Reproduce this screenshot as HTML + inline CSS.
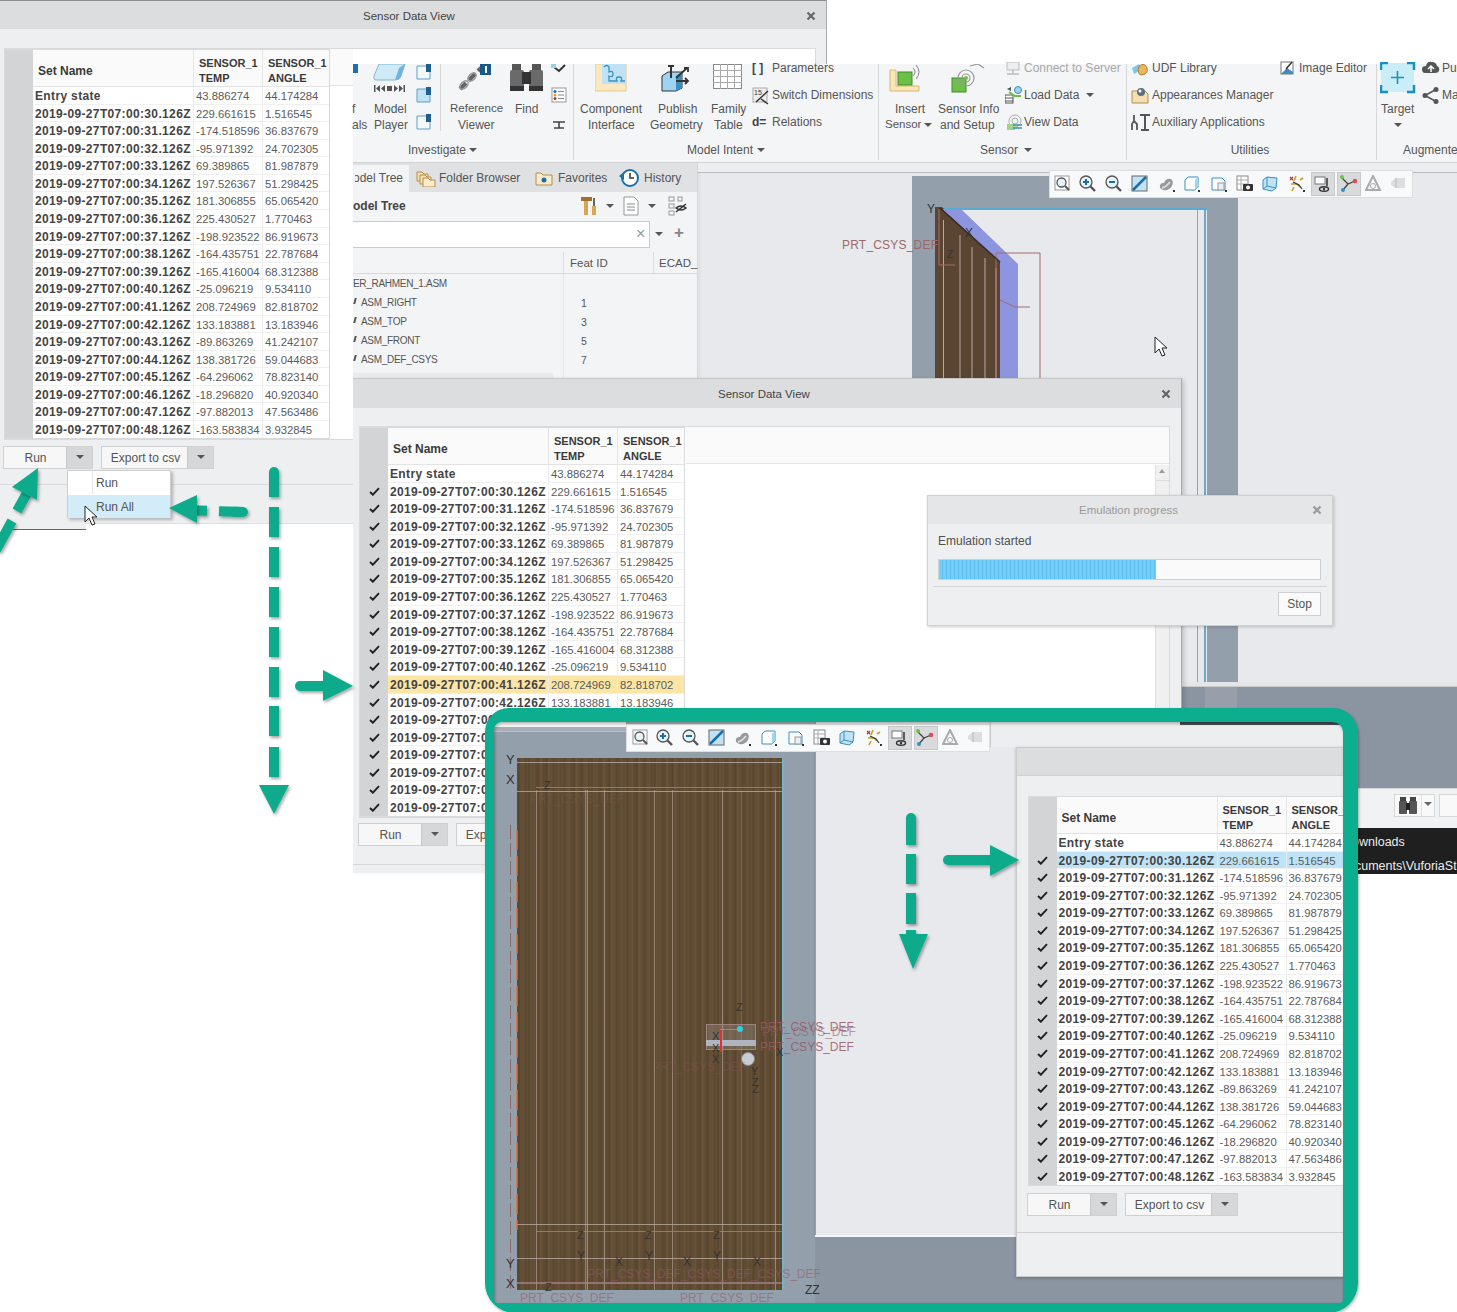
<!DOCTYPE html>
<html><head><meta charset="utf-8"><style>
*{margin:0;padding:0;box-sizing:border-box}
html,body{width:1457px;height:1312px;overflow:hidden;background:#fff;font-family:"Liberation Sans",sans-serif;color:#333;position:relative}
.a{position:absolute}
.t{white-space:nowrap;line-height:1.2}
.tb{position:absolute;background:#fff;border:1px solid #d9dadb;overflow:hidden}
.gc{position:absolute;left:0;top:0;width:28px;background:#d3d4d5}
.hd{position:absolute;left:28px;top:0;height:37.5px;background:#fafafa;border-bottom:1px solid #e3e3e3}
.hd div{position:absolute;top:0;height:37px;font-weight:bold;font-size:11px;color:#3a3a3a;border-right:1px solid #e6e6e6}
.h1{left:0;width:161px;padding:14px 0 0 5px;font-size:12px!important}
.h2{left:161px;width:69px;padding:6px 0 0 5px;line-height:15.5px}
.h3{left:230px;width:68px;padding:6px 0 0 5px;line-height:15.5px}
.rw{position:absolute;left:0;height:17.58px;width:100%}
.rw div{position:absolute;top:0;height:17.58px;line-height:19px;border-bottom:1px solid #f0f0f0;white-space:nowrap;overflow:hidden}
.c1{left:28px;width:161px;font-weight:bold;font-size:12px;letter-spacing:0.35px;color:#444;padding-left:2px;border-right:1px solid #ececec}
.c2{left:189px;width:69px;font-size:11.3px;color:#5a5a5a;padding-left:2px;border-right:1px solid #ececec}
.c3{left:258px;width:68px;font-size:11.3px;color:#5a5a5a;padding-left:2px;border-right:1px solid #ececec}
.ck{position:absolute;left:8.5px;top:4px}
.btn{position:absolute;height:23px;background:#f7f7f7;border:1px solid #cfd0d1;font-size:12px;color:#555;text-align:center;line-height:23px}
.dd{position:absolute;top:0;right:0;height:21px;width:26px;background:#d6d7d8;border-left:1px solid #c8c8c8}
.dd:after{content:"";position:absolute;left:9px;top:8px;border-left:4px solid transparent;border-right:4px solid transparent;border-top:4px solid #555}
.ttl{position:absolute;font-size:11.5px;color:#444}
</style></head><body>
<div class="a" style="left:0;top:0;width:827px;height:530px;background:#eeeff0;border-right:1px solid #a9aaab;border-top:1px solid #8d8e8f"></div>
<div class="a" style="left:0;top:1px;width:826px;height:28px;background:#dcdddf"></div>
<div class="ttl" style="left:363px;top:10px">Sensor Data View</div>
<svg class="a" style="left:806px;top:11px;" width="10" height="10" viewBox="0 0 10 10"><path d="M1.5 1.5 L8.5 8.5 M8.5 1.5 L1.5 8.5" stroke="#666" stroke-width="2.2"/></svg>
<div class="a" style="left:4px;top:48px;width:812px;height:16px;background:#fff;border:1px solid #d9dadb;border-bottom:none"></div>
<div class="a" style="left:4px;top:48px;width:349px;height:392px;background:#fff;border:1px solid #d9dadb;border-right:none"></div>
<div class="a" style="left:330px;top:49px;width:23px;height:37px;background:#fafafa;border-bottom:1px solid #e3e3e3"></div>
<div class="tb" style="left:4px;top:48.5px;width:326px;height:390.1px">
<div class="gc" style="height:390.1px"></div>
<div class="hd" style="width:298px"><div class="h1">Set Name</div><div class="h2">SENSOR_1<br>TEMP</div><div class="h3">SENSOR_1<br>ANGLE</div></div>
<div class="rw" style="top:37.50px"><div class="c1" style="">Entry state</div><div class="c2" style="">43.886274</div><div class="c3" style="">44.174284</div></div>
<div class="rw" style="top:55.08px"><div class="c1" style="">2019-09-27T07:00:30.126Z</div><div class="c2" style="">229.661615</div><div class="c3" style="">1.516545</div></div>
<div class="rw" style="top:72.66px"><div class="c1" style="">2019-09-27T07:00:31.126Z</div><div class="c2" style="">-174.518596</div><div class="c3" style="">36.837679</div></div>
<div class="rw" style="top:90.24px"><div class="c1" style="">2019-09-27T07:00:32.126Z</div><div class="c2" style="">-95.971392</div><div class="c3" style="">24.702305</div></div>
<div class="rw" style="top:107.82px"><div class="c1" style="">2019-09-27T07:00:33.126Z</div><div class="c2" style="">69.389865</div><div class="c3" style="">81.987879</div></div>
<div class="rw" style="top:125.40px"><div class="c1" style="">2019-09-27T07:00:34.126Z</div><div class="c2" style="">197.526367</div><div class="c3" style="">51.298425</div></div>
<div class="rw" style="top:142.98px"><div class="c1" style="">2019-09-27T07:00:35.126Z</div><div class="c2" style="">181.306855</div><div class="c3" style="">65.065420</div></div>
<div class="rw" style="top:160.56px"><div class="c1" style="">2019-09-27T07:00:36.126Z</div><div class="c2" style="">225.430527</div><div class="c3" style="">1.770463</div></div>
<div class="rw" style="top:178.14px"><div class="c1" style="">2019-09-27T07:00:37.126Z</div><div class="c2" style="">-198.923522</div><div class="c3" style="">86.919673</div></div>
<div class="rw" style="top:195.72px"><div class="c1" style="">2019-09-27T07:00:38.126Z</div><div class="c2" style="">-164.435751</div><div class="c3" style="">22.787684</div></div>
<div class="rw" style="top:213.30px"><div class="c1" style="">2019-09-27T07:00:39.126Z</div><div class="c2" style="">-165.416004</div><div class="c3" style="">68.312388</div></div>
<div class="rw" style="top:230.88px"><div class="c1" style="">2019-09-27T07:00:40.126Z</div><div class="c2" style="">-25.096219</div><div class="c3" style="">9.534110</div></div>
<div class="rw" style="top:248.46px"><div class="c1" style="">2019-09-27T07:00:41.126Z</div><div class="c2" style="">208.724969</div><div class="c3" style="">82.818702</div></div>
<div class="rw" style="top:266.04px"><div class="c1" style="">2019-09-27T07:00:42.126Z</div><div class="c2" style="">133.183881</div><div class="c3" style="">13.183946</div></div>
<div class="rw" style="top:283.62px"><div class="c1" style="">2019-09-27T07:00:43.126Z</div><div class="c2" style="">-89.863269</div><div class="c3" style="">41.242107</div></div>
<div class="rw" style="top:301.20px"><div class="c1" style="">2019-09-27T07:00:44.126Z</div><div class="c2" style="">138.381726</div><div class="c3" style="">59.044683</div></div>
<div class="rw" style="top:318.78px"><div class="c1" style="">2019-09-27T07:00:45.126Z</div><div class="c2" style="">-64.296062</div><div class="c3" style="">78.823140</div></div>
<div class="rw" style="top:336.36px"><div class="c1" style="">2019-09-27T07:00:46.126Z</div><div class="c2" style="">-18.296820</div><div class="c3" style="">40.920340</div></div>
<div class="rw" style="top:353.94px"><div class="c1" style="">2019-09-27T07:00:47.126Z</div><div class="c2" style="">-97.882013</div><div class="c3" style="">47.563486</div></div>
<div class="rw" style="top:371.52px"><div class="c1" style="">2019-09-27T07:00:48.126Z</div><div class="c2" style="">-163.583834</div><div class="c3" style="">3.932845</div></div>
</div>
<div class="btn" style="left:3px;top:446px;width:90px"><span style="position:absolute;left:0;width:63px;top:0">Run</span><div class="dd"></div></div>
<div class="btn" style="left:101px;top:446px;width:113px"><span style="position:absolute;left:0;width:87px;top:0">Export to csv</span><div class="dd"></div></div>
<div class="a" style="left:0;top:484px;width:353px;height:1px;background:#d9d9d9"></div>
<div class="a" style="left:86px;top:523px;width:267px;height:8px;background:#fff;border-top:1px solid #cfe3ee"></div>
<div class="a" style="left:10px;top:529px;width:76px;height:1px;background:#666"></div>
<div class="a" style="left:67px;top:470px;width:104px;height:48px;background:#fff;border:1px solid #cfcfcf;box-shadow:2px 2px 3px rgba(0,0,0,.25)"><div class="a" style="left:24px;top:0;width:1px;height:23px;background:#e5e5e5"></div><div class="a" style="left:28px;top:5px;font-size:12px;color:#555">Run</div><div class="a" style="left:0;top:24px;width:102px;height:23px;background:#d2ecf9"></div><div class="a" style="left:28px;top:29px;font-size:12px;color:#555">Run All</div></div>
<svg class="a" style="left:84px;top:505px;" width="14" height="22" viewBox="0 0 14 22"><path d="M1 1 L1 17 L5 13 L8 20 L11 19 L8 12 L13 12Z" fill="#fff" stroke="#222" stroke-width="1"/></svg>
<div class="a" style="left:353px;top:64px;width:1104px;height:99px;background:#f4f5f6;overflow:hidden"></div>
<div class="a" style="left:353px;top:162px;width:1104px;height:3px;background:#dfe1e3;border-top:1px solid #cfd1d3"></div>
<div class="a" style="left:440px;top:64px;width:1px;height:67px;background:#d5d7d9"></div>
<div class="a" style="left:573px;top:64px;width:1px;height:96px;background:#d5d7d9"></div>
<div class="a" style="left:878px;top:64px;width:1px;height:96px;background:#d5d7d9"></div>
<div class="a" style="left:1126px;top:64px;width:1px;height:96px;background:#d5d7d9"></div>
<div class="a" style="left:1376px;top:64px;width:1px;height:96px;background:#d5d7d9"></div>
<svg class="a" style="left:353px;top:64px;" width="6" height="10" viewBox="0 0 6 10"><rect x="0" y="0" width="5" height="9" fill="#1f6fa8"/></svg>
<div class="a t" style="left:352px;top:101.8px;font-size:12px;color:#555;font-weight:normal;">f</div>
<div class="a t" style="left:352px;top:117.8px;font-size:12px;color:#555;font-weight:normal;">als</div>
<svg class="a" style="left:373px;top:64px;" width="36" height="30" viewBox="0 0 36 30"><path d="M6 0 L32 0 L28 12 Q27 16 22 16 L3 16 Q0 16 1 12 Z" fill="#cfe9f5" stroke="#7fb8d8"/><path d="M32 0 L28 12 Q27 16 22 16 L26 4 Z" fill="#6fb3de"/><g fill="#555"><rect x="1" y="21" width="1.5" height="7"/><path d="M3 24.5 L7 21 L7 28Z"/><path d="M8 24.5 L12 21 L12 28Z"/><rect x="14" y="22" width="5" height="5"/><path d="M21 21 L25 24.5 L21 28Z"/><path d="M26 21 L30 24.5 L26 28Z"/><rect x="30.5" y="21" width="1.5" height="7"/></g></svg>
<div class="a t" style="left:374px;top:101.8px;font-size:12px;color:#555;font-weight:normal;">Model</div>
<div class="a t" style="left:374px;top:117.8px;font-size:12px;color:#555;font-weight:normal;">Player</div>
<svg class="a" style="left:416px;top:64px;" width="16" height="17" viewBox="0 0 16 17"><path d="M1 2 L11 2 L14 5 L14 15 L1 15 Z" fill="#f4f8fb" stroke="#5aa0c8"/><rect x="10" y="0" width="5" height="8" fill="#1f5f8f"/></svg>
<svg class="a" style="left:416px;top:87px;" width="16" height="17" viewBox="0 0 16 17"><path d="M1 2 L11 2 L14 5 L14 15 L1 15 Z" fill="#bfe3f4" stroke="#5aa0c8"/><rect x="10" y="0" width="5" height="8" fill="#1f5f8f"/></svg>
<svg class="a" style="left:416px;top:114px;" width="16" height="17" viewBox="0 0 16 17"><path d="M1 2 L11 2 L14 5 L14 15 L1 15 Z" fill="#f4f8fb" stroke="#5aa0c8"/><rect x="10" y="0" width="5" height="8" fill="#1f5f8f"/></svg>
<svg class="a" style="left:457px;top:64px;" width="36" height="28" viewBox="0 0 36 28"><g stroke="#666" stroke-width="4" fill="none"><path d="M3 25 L9 19"/><path d="M12 16 L18 10"/><path d="M21 7 L24 4"/></g><g stroke="#999" stroke-width="1.5" fill="none"><ellipse cx="7" cy="21" rx="5" ry="3" transform="rotate(-45 7 21)"/><ellipse cx="15" cy="13" rx="5" ry="3" transform="rotate(-45 15 13)"/></g><rect x="23" y="0" width="11" height="11" fill="#1a5a8a"/><rect x="28" y="2" width="2" height="7" fill="#fff"/></svg>
<div class="a t" style="left:450px;top:102.1px;font-size:11.5px;color:#555;font-weight:normal;">Reference</div>
<div class="a t" style="left:458px;top:117.8px;font-size:12px;color:#555;font-weight:normal;">Viewer</div>
<svg class="a" style="left:510px;top:64px;" width="34" height="28" viewBox="0 0 34 28"><rect x="2" y="0" width="9" height="6" fill="#555"/><rect x="22" y="0" width="9" height="6" fill="#555"/><rect x="0" y="6" width="14" height="20" rx="2" fill="#6a6a6a"/><rect x="19" y="6" width="14" height="20" rx="2" fill="#6a6a6a"/><rect x="12" y="8" width="9" height="12" fill="#333"/><rect x="0" y="22" width="14" height="5" fill="#333"/><rect x="19" y="22" width="14" height="5" fill="#333"/></svg>
<div class="a t" style="left:515px;top:101.8px;font-size:12px;color:#555;font-weight:normal;">Find</div>
<svg class="a" style="left:551px;top:64px;" width="16" height="12" viewBox="0 0 16 12"><path d="M3 3 L8 7 L14 1" stroke="#333" stroke-width="2" fill="none"/><rect x="0" y="0" width="5" height="4" fill="#9cd0ea"/></svg>
<svg class="a" style="left:551px;top:87px;" width="16" height="16" viewBox="0 0 16 16"><rect x="1" y="1" width="14" height="14" fill="#fff" stroke="#999"/><circle cx="4" cy="4.5" r="1.5" fill="#1f6fa8"/><circle cx="4" cy="8" r="1.5" fill="#e0a020"/><circle cx="4" cy="11.5" r="1.5" fill="#c03030"/><g stroke="#888"><path d="M7 4.5H13M7 8H13M7 11.5H13"/></g></svg>
<svg class="a" style="left:551px;top:118px;" width="16" height="12" viewBox="0 0 16 12"><path d="M2 4 H14 M8 4 V10 M3 10 H13" stroke="#444" stroke-width="1.6" fill="none"/></svg>
<div class="a t" style="left:408px;top:142.8px;font-size:12px;color:#555;font-weight:normal;">Investigate</div>
<div class="a" style="left:469px;top:148.0px;width:0;height:0;border-left:4px solid transparent;border-right:4px solid transparent;border-top:4px solid #555"></div>
<svg class="a" style="left:595px;top:64px;" width="32" height="28" viewBox="0 0 32 28"><rect x="0" y="0" width="31" height="27" fill="#fbe8c0" stroke="#e0c890"/><rect x="7" y="0" width="24" height="20" fill="#bfe3f4"/><path d="M9 3 Q12 0 14 3 L14 8 Q18 6 18 10 Q18 14 14 12 L14 17 L22 17 Q20 13 24 13 Q28 13 26 17 L30 17" stroke="#3a8fc0" stroke-width="1.3" fill="none"/></svg>
<div class="a t" style="left:580px;top:101.8px;font-size:12px;color:#555;font-weight:normal;">Component</div>
<div class="a t" style="left:588px;top:117.8px;font-size:12px;color:#555;font-weight:normal;">Interface</div>
<svg class="a" style="left:660px;top:64px;" width="32" height="28" viewBox="0 0 32 28"><path d="M2 12 L8 8 L22 8 L22 24 L16 27 L2 27Z" fill="#9fd4f0" stroke="#333" stroke-width="1"/><path d="M16 12 L22 8 L22 24 L16 27Z" fill="#3a8fc0"/><path d="M8 2 H14 M11 2 V14" stroke="#333" stroke-width="2"/><path d="M16 14 L27 4 M24 4 H28 V8 M16 17 H28 M25 14 L28 17 L25 20" stroke="#333" stroke-width="1.8" fill="none"/></svg>
<div class="a t" style="left:658px;top:101.8px;font-size:12px;color:#555;font-weight:normal;">Publish</div>
<div class="a t" style="left:650px;top:117.8px;font-size:12px;color:#555;font-weight:normal;">Geometry</div>
<svg class="a" style="left:713px;top:64px;" width="30" height="26" viewBox="0 0 30 26"><rect x="0.5" y="0.5" width="28" height="24" fill="#fff" stroke="#888"/><g stroke="#aaa"><path d="M0 6.5H29M0 12.5H29M0 18.5H29M7.5 0V25M14.5 0V25M21.5 0V25"/></g></svg>
<div class="a t" style="left:711px;top:101.8px;font-size:12px;color:#555;font-weight:normal;">Family</div>
<div class="a t" style="left:714px;top:117.8px;font-size:12px;color:#555;font-weight:normal;">Table</div>
<div class="a t" style="left:752px;top:61.4px;font-size:11px;color:#555;font-weight:normal;"><b style="font-size:12px;color:#444">[ ]</b></div>
<div class="a t" style="left:772px;top:60.8px;font-size:12px;color:#555;font-weight:normal;">Parameters</div>
<svg class="a" style="left:752px;top:87px;" width="18" height="18" viewBox="0 0 18 18"><rect x="1" y="1" width="14" height="14" fill="#eee" stroke="#aaa"/><text x="2" y="8" font-size="7" fill="#333" font-family="Liberation Sans">15</text><path d="M4 15 L16 4 M9 12 L16 17" stroke="#333" stroke-width="1.5"/></svg>
<div class="a t" style="left:772px;top:87.8px;font-size:12px;color:#555;font-weight:normal;">Switch Dimensions</div>
<div class="a t" style="left:752px;top:114.8px;font-size:12px;color:#555;font-weight:normal;"><b style="color:#444">d=</b></div>
<div class="a t" style="left:772px;top:114.8px;font-size:12px;color:#555;font-weight:normal;">Relations</div>
<div class="a t" style="left:687px;top:142.8px;font-size:12px;color:#555;font-weight:normal;">Model Intent</div>
<div class="a" style="left:757px;top:148.0px;width:0;height:0;border-left:4px solid transparent;border-right:4px solid transparent;border-top:4px solid #555"></div>
<svg class="a" style="left:889px;top:64px;" width="34" height="28" viewBox="0 0 34 28"><path d="M1 6 L7 6 L7 22 L30 22 L30 27 L1 27Z" fill="#fbe6b8" stroke="#d8b870"/><rect x="9" y="8" width="14" height="13" fill="#6cc04a" stroke="#3f8f2a"/><g stroke="#888" fill="none"><path d="M24 4 Q28 8 24 12"/><path d="M27 1 Q33 8 27 15"/></g></svg>
<div class="a t" style="left:895px;top:101.8px;font-size:12px;color:#555;font-weight:normal;">Insert</div>
<div class="a t" style="left:885px;top:118.1px;font-size:11.5px;color:#555;font-weight:normal;">Sensor</div>
<div class="a" style="left:924px;top:123.0px;width:0;height:0;border-left:4px solid transparent;border-right:4px solid transparent;border-top:4px solid #555"></div>
<svg class="a" style="left:948px;top:64px;" width="38" height="30" viewBox="0 0 38 30"><rect x="4" y="14" width="14" height="14" fill="#6cc04a" stroke="#3f8f2a"/><g stroke="#999" fill="none" stroke-width="1.2"><circle cx="18" cy="14" r="4"/><circle cx="18" cy="14" r="8"/><path d="M22 2 L30 0 L36 4"/></g><circle cx="18" cy="14" r="2" fill="#6cc04a"/></svg>
<div class="a t" style="left:938px;top:101.8px;font-size:12px;color:#555;font-weight:normal;">Sensor Info</div>
<div class="a t" style="left:940px;top:117.8px;font-size:12px;color:#555;font-weight:normal;">and Setup</div>
<svg class="a" style="left:1005px;top:62px;" width="16" height="14" viewBox="0 0 16 14"><rect x="2" y="0" width="12" height="8" fill="#eee" stroke="#bbb"/><path d="M8 8 V11 M2 12 H14" stroke="#bbb" stroke-width="1.5"/></svg>
<div class="a t" style="left:1024px;top:60.8px;font-size:12px;color:#a9a9a9;font-weight:normal;">Connect to Server</div>
<svg class="a" style="left:1005px;top:86px;" width="18" height="18" viewBox="0 0 18 18"><rect x="0" y="9" width="8" height="8" fill="#fff" stroke="#555"/><path d="M0 12H8M0 15H8" stroke="#555"/><circle cx="13" cy="4" r="3.5" fill="#9fd4f0" stroke="#3a8fc0"/><path d="M4 6 L10 10 L16 10" stroke="#6cc04a" stroke-width="2" fill="none"/><path d="M2 3 L6 1 L6 5Z" fill="#555"/></svg>
<div class="a t" style="left:1024px;top:87.8px;font-size:12px;color:#555;font-weight:normal;">Load Data</div>
<div class="a" style="left:1086px;top:93.0px;width:0;height:0;border-left:4px solid transparent;border-right:4px solid transparent;border-top:4px solid #555"></div>
<svg class="a" style="left:1005px;top:113px;" width="18" height="18" viewBox="0 0 18 18"><g stroke="#aaa" fill="none"><circle cx="10" cy="8" r="3"/><circle cx="10" cy="8" r="6"/></g><rect x="2" y="11" width="8" height="6" fill="#9fd48a"/><path d="M8 12H17M8 15H17" stroke="#3a8fc0" stroke-width="1.5"/></svg>
<div class="a t" style="left:1024px;top:114.8px;font-size:12px;color:#555;font-weight:normal;">View Data</div>
<div class="a t" style="left:980px;top:142.8px;font-size:12px;color:#555;font-weight:normal;">Sensor</div>
<div class="a" style="left:1024px;top:148.0px;width:0;height:0;border-left:4px solid transparent;border-right:4px solid transparent;border-top:4px solid #555"></div>
<svg class="a" style="left:1131px;top:60px;" width="18" height="16" viewBox="0 0 18 16"><path d="M1 8 L8 4 L10 10 L3 14Z" fill="#7fc4ea"/><path d="M8 6 Q14 2 16 8 Q18 14 10 15 Q6 14 8 6Z" fill="#e8b860" stroke="#b08030"/></svg>
<div class="a t" style="left:1152px;top:60.8px;font-size:12px;color:#555;font-weight:normal;">UDF Library</div>
<svg class="a" style="left:1131px;top:86px;" width="18" height="18" viewBox="0 0 18 18"><path d="M1 5 L14 5 L17 8 L17 17 L1 17Z" fill="#f4dfb0" stroke="#b09050"/><circle cx="10" cy="6" r="4" fill="#5a6f80"/><circle cx="9" cy="5" r="1.5" fill="#fff"/></svg>
<div class="a t" style="left:1152px;top:87.8px;font-size:12px;color:#555;font-weight:normal;">Appearances Manager</div>
<svg class="a" style="left:1131px;top:113px;" width="20" height="18" viewBox="0 0 20 18"><path d="M3 2 L3 8 L1 11 L1 17 M3 8 L6 11 L6 17" stroke="#555" stroke-width="1.8" fill="none"/><path d="M9 2 H19 M14 2 V17 M10 17 H18" stroke="#555" stroke-width="2" fill="none"/></svg>
<div class="a t" style="left:1152px;top:114.8px;font-size:12px;color:#555;font-weight:normal;">Auxiliary Applications</div>
<svg class="a" style="left:1280px;top:60px;" width="14" height="15" viewBox="0 0 14 15"><rect x="1" y="2" width="12" height="12" fill="#fff" stroke="#777"/><path d="M1 14 L7 8 L13 12 L13 14Z" fill="#3a8fc0"/><path d="M6 9 L12 2" stroke="#333" stroke-width="1.5"/></svg>
<div class="a t" style="left:1299px;top:60.8px;font-size:12px;color:#555;font-weight:normal;">Image Editor</div>
<div class="a t" style="left:1100px;width:300px;text-align:center;top:142.8px;font-size:12px;color:#555;font-weight:normal;">Utilities</div>
<svg class="a" style="left:1380px;top:62px;" width="36" height="32" viewBox="0 0 36 32"><rect x="1" y="1" width="33" height="29" fill="#c9eef7"/><path d="M1 8 V1 H8 M27 1 H34 V8 M34 23 V30 H27 M8 30 H1 V23" stroke="#1a8fc0" stroke-width="2.5" fill="none"/><path d="M17.5 9 V22 M11 15.5 H24" stroke="#1a8fc0" stroke-width="1.6"/></svg>
<div class="a t" style="left:1381px;top:101.8px;font-size:12px;color:#555;font-weight:normal;">Target</div>
<div class="a" style="left:1394px;top:123.0px;width:0;height:0;border-left:4px solid transparent;border-right:4px solid transparent;border-top:4px solid #555"></div>
<svg class="a" style="left:1422px;top:61px;" width="18" height="14" viewBox="0 0 18 14"><path d="M3 12 Q0 12 0 8 Q0 5 4 5 Q5 0 10 1 Q14 1 15 5 Q18 6 17 10 Q16 12 13 12Z" fill="#555"/><path d="M9 11 V6 M6 8 L9 5 L12 8" stroke="#fff" stroke-width="1.5" fill="none"/></svg>
<div class="a t" style="left:1442px;top:60.8px;font-size:12px;color:#555;font-weight:normal;">Pul</div>
<svg class="a" style="left:1422px;top:87px;" width="18" height="17" viewBox="0 0 18 17"><circle cx="3" cy="8.5" r="2.5" fill="#555"/><circle cx="14" cy="2.5" r="2.5" fill="#555"/><circle cx="14" cy="14.5" r="2.5" fill="#555"/><path d="M3 8.5 L14 2.5 M3 8.5 L14 14.5" stroke="#555" stroke-width="1.5"/></svg>
<div class="a t" style="left:1442px;top:87.8px;font-size:12px;color:#555;font-weight:normal;">Ma</div>
<div class="a t" style="left:1403px;top:142.8px;font-size:12px;color:#555;font-weight:normal;">Augmente</div>
<div class="a" style="left:353px;top:165px;width:345px;height:214px;background:#f3f4f5"></div>
<div class="a" style="left:409px;top:165px;width:289px;height:27px;background:#dfe1e3"></div>
<div class="a" style="left:697px;top:165px;width:1px;height:214px;background:#d3d5d7"></div>
<div class="a t" style="left:353px;top:170.8px;font-size:12px;color:#555;font-weight:normal;clip-path:inset(0 0 0 2px)">odel Tree</div>
<svg class="a" style="left:416px;top:169px;" width="20" height="18" viewBox="0 0 20 18"><path d="M1 3 H6 L8 5 H12 V12 H1Z" fill="#f4dfb0" stroke="#b09050"/><path d="M4 6 H9 L11 8 H15 V15 H4Z" fill="#f4dfb0" stroke="#b09050"/><path d="M7 9 H12 L14 11 H19 V18 H7Z" fill="#fbeacb" stroke="#b09050"/></svg>
<div class="a t" style="left:439px;top:170.8px;font-size:12px;color:#555;font-weight:normal;">Folder Browser</div>
<svg class="a" style="left:535px;top:170px;" width="18" height="16" viewBox="0 0 18 16"><path d="M1 3 H6 L8 5 H17 V15 H1Z" fill="#fbeacb" stroke="#b09050"/><circle cx="9" cy="10" r="2.5" fill="#1a6fa8"/></svg>
<div class="a t" style="left:558px;top:170.8px;font-size:12px;color:#555;font-weight:normal;">Favorites</div>
<svg class="a" style="left:619px;top:168px;" width="20" height="20" viewBox="0 0 20 20"><circle cx="11" cy="10" r="8" fill="#fff" stroke="#1a6fa8" stroke-width="2"/><path d="M11 5 V10 H15" stroke="#333" stroke-width="1.5" fill="none"/><path d="M0 8 L5 4 L5 12Z" fill="#1a6fa8"/></svg>
<div class="a t" style="left:644px;top:170.8px;font-size:12px;color:#555;font-weight:normal;">History</div>
<div class="a t" style="left:353px;top:198.8px;font-size:12px;color:#444;font-weight:bold;">odel Tree</div>
<svg class="a" style="left:580px;top:196px;" width="18" height="20" viewBox="0 0 18 20"><rect x="1" y="1" width="11" height="4" fill="#a07030"/><rect x="4" y="5" width="4" height="14" fill="#d8a850"/><rect x="13" y="2" width="2" height="8" fill="#666"/><rect x="12" y="10" width="4" height="9" fill="#d8a850"/></svg>
<div class="a" style="left:606px;top:204.0px;width:0;height:0;border-left:4px solid transparent;border-right:4px solid transparent;border-top:4px solid #555"></div>
<svg class="a" style="left:623px;top:196px;" width="16" height="20" viewBox="0 0 16 20"><path d="M1 1 H11 L15 5 V19 H1Z" fill="#fff" stroke="#999"/><g stroke="#888"><path d="M4 8H12M4 11H12M4 14H12"/></g></svg>
<div class="a" style="left:648px;top:204.0px;width:0;height:0;border-left:4px solid transparent;border-right:4px solid transparent;border-top:4px solid #555"></div>
<svg class="a" style="left:668px;top:196px;" width="20" height="20" viewBox="0 0 20 20"><g fill="none" stroke="#999"><rect x="1" y="1" width="5" height="4"/><rect x="1" y="8" width="5" height="4"/><rect x="1" y="15" width="5" height="4"/><rect x="10" y="1" width="4" height="4"/></g><path d="M8 12 Q13 8 18 12 Q13 16 8 12Z" fill="none" stroke="#333" stroke-width="1.5"/><path d="M8 16 L18 8" stroke="#333" stroke-width="1.5"/></svg>
<div class="a" style="left:353px;top:221px;width:297px;height:27px;background:#fff;border:1px solid #c9cbcd;border-left:none"></div>
<div class="a t" style="left:636px;top:224.4px;font-size:16px;color:#999;font-weight:normal;">&#215;</div>
<div class="a" style="left:655px;top:232.0px;width:0;height:0;border-left:4px solid transparent;border-right:4px solid transparent;border-top:4px solid #555"></div>
<div class="a t" style="left:674px;top:222.8px;font-size:17px;color:#888;font-weight:bold;">+</div>
<div class="a" style="left:563px;top:252px;width:1px;height:21px;background:#dcdcdc"></div>
<div class="a" style="left:653px;top:252px;width:1px;height:21px;background:#dcdcdc"></div>
<div class="a" style="left:353px;top:273px;width:345px;height:1px;background:#d9d9d9"></div>
<div class="a t" style="left:570px;top:257.1px;font-size:11.5px;color:#555;font-weight:normal;">Feat ID</div>
<div class="a t" style="left:659px;top:257.1px;font-size:11.5px;color:#555;font-weight:normal;">ECAD_</div>
<div class="a" style="left:563px;top:274px;width:1px;height:104px;background:#e6e7e8"></div>
<div class="a t" style="left:353px;top:278.0px;font-size:10px;color:#555;font-weight:normal;letter-spacing:-0.3px">ER_RAHMEN_1.ASM</div>
<div class="a t" style="left:361px;top:297.0px;font-size:10px;color:#555;font-weight:normal;letter-spacing:-0.3px">ASM_RIGHT</div>
<div class="a t" style="left:581px;top:296.7px;font-size:10.5px;color:#555;font-weight:normal;">1</div>
<div class="a" style="left:354px;top:298px;width:2px;height:6px;background:#555;transform:skewX(-15deg)"></div>
<div class="a t" style="left:361px;top:316.0px;font-size:10px;color:#555;font-weight:normal;letter-spacing:-0.3px">ASM_TOP</div>
<div class="a t" style="left:581px;top:315.7px;font-size:10.5px;color:#555;font-weight:normal;">3</div>
<div class="a" style="left:354px;top:317px;width:2px;height:6px;background:#555;transform:skewX(-15deg)"></div>
<div class="a t" style="left:361px;top:335.0px;font-size:10px;color:#555;font-weight:normal;letter-spacing:-0.3px">ASM_FRONT</div>
<div class="a t" style="left:581px;top:334.7px;font-size:10.5px;color:#555;font-weight:normal;">5</div>
<div class="a" style="left:354px;top:336px;width:2px;height:6px;background:#555;transform:skewX(-15deg)"></div>
<div class="a t" style="left:361px;top:354.0px;font-size:10px;color:#555;font-weight:normal;letter-spacing:-0.3px">ASM_DEF_CSYS</div>
<div class="a t" style="left:581px;top:353.7px;font-size:10.5px;color:#555;font-weight:normal;">7</div>
<div class="a" style="left:354px;top:355px;width:2px;height:6px;background:#555;transform:skewX(-15deg)"></div>
<div class="a" style="left:353px;top:373px;width:200px;height:5px;background:#e0e0e0;opacity:.5"></div>
<div class="a" style="left:698px;top:163px;width:759px;height:10px;background:#eceef0;border-bottom:1px solid #b4b8bc"></div>
<div class="a" style="left:698px;top:173px;width:759px;height:514px;background:#e8e9ed"></div>
<div class="a" style="left:698px;top:173px;width:3px;height:514px;background:#e1e3e5"></div>
<div class="a" style="left:912px;top:176px;width:326px;height:511px;background:#949fac"></div>
<div class="a" style="left:940px;top:210px;width:267px;height:477px;background:#e8e9ed"></div>
<div class="a" style="left:940px;top:208px;width:267px;height:2px;background:#5aaad0"></div>
<div class="a" style="left:1204px;top:208px;width:2px;height:479px;background:#6aaac8"></div>
<div class="a" style="left:1197px;top:210px;width:1px;height:477px;background:#9aa0a6"></div>
<svg class="a" style="left:905px;top:195px;" width="140" height="185" viewBox="0 0 140 185"><path d="M30 12 L37 12 L95 67 L95 185 L30 185Z" fill="#5a4432"/><path d="M37 14 L57 15 L113 69 L113 185 L95 185 L95 67Z" fill="#8d95e0"/><g stroke="#b8a8a0" stroke-width="1" fill="none"><path d="M38.5 25 V185 M55 40 V185 M67 52 V185 M80 63 V185 M91 73 V185"/></g><g stroke="#a86a6a" stroke-width="1" fill="none"><path d="M34 14 V70 H50 M91 58 H135 V185 M91 58 V185 M95 105 L110 112 L125 112"/></g><path d="M35 13 L95 67" stroke="#3a2a20" stroke-width="1.5"/><text x="22" y="18" font-size="12" fill="#333" font-family="Liberation Sans">Y</text><text x="60" y="42" font-size="12" fill="#333" font-family="Liberation Sans">X</text><text x="42" y="63" font-size="10" fill="#333" font-family="Liberation Sans">Z</text></svg>
<div class="a t" style="left:842px;top:237.8px;font-size:12px;color:#9a6a6a;font-weight:normal;letter-spacing:0.2px">PRT_CSYS_DEF</div>
<div class="a" style="left:1049px;top:170px;width:364px;height:28px;background:#f8f9fa;border:1px solid #dcdee0"></div>
<svg class="a" style="left:1054px;top:175px;" width="18" height="18" viewBox="0 0 18 18"><rect x="1" y="1" width="14" height="14" fill="#fff" stroke="#999"/><circle cx="7.5" cy="7.5" r="4.5" fill="#e6f3fa" stroke="#555" stroke-width="1.3"/><path d="M11 11 L15 15" stroke="#555" stroke-width="2"/></svg>
<svg class="a" style="left:1079px;top:175px;" width="18" height="18" viewBox="0 0 18 18"><circle cx="7" cy="7" r="6" fill="#e6f3fa" stroke="#555" stroke-width="1.3"/><path d="M4 7H10M7 4V10" stroke="#1a6fa8" stroke-width="2"/><path d="M11.5 11.5 L16 16" stroke="#555" stroke-width="2.4"/></svg>
<svg class="a" style="left:1105px;top:175px;" width="18" height="18" viewBox="0 0 18 18"><circle cx="7" cy="7" r="6" fill="#e6f3fa" stroke="#555" stroke-width="1.3"/><path d="M4 7H10" stroke="#1a6fa8" stroke-width="2"/><path d="M11.5 11.5 L16 16" stroke="#555" stroke-width="2.4"/></svg>
<svg class="a" style="left:1131px;top:175px;" width="18" height="18" viewBox="0 0 18 18"><rect x="1" y="1" width="15" height="15" fill="#bfe3f4" stroke="#666"/><path d="M2 15 L15 2" stroke="#1a6fa8" stroke-width="2.5"/></svg>
<svg class="a" style="left:1158px;top:175px;" width="18" height="18" viewBox="0 0 18 18"><path d="M2 13 Q1 8 6 8 Q8 3 13 4 Q16 6 14 11 Q11 16 5 15Z" fill="#999"/><path d="M4 13 Q8 12 12 7" stroke="#ddd" stroke-width="2" fill="none"/><rect x="15" y="15" width="2" height="2" fill="#333"/></svg>
<svg class="a" style="left:1183px;top:175px;" width="18" height="18" viewBox="0 0 18 18"><path d="M2 5 L5 2 L15 2 L15 12 L12 15 L2 15Z" fill="#fff" stroke="#3a8fc0"/><path d="M12 5 L15 2 L15 12 L12 15Z" fill="#9fd4f0"/><rect x="15" y="15" width="2" height="2" fill="#333"/></svg>
<svg class="a" style="left:1210px;top:175px;" width="18" height="18" viewBox="0 0 18 18"><path d="M2 3 L12 3 L15 6 L15 15 L2 15Z" fill="#fff" stroke="#3a8fc0"/><rect x="8" y="8" width="6" height="7" fill="#eee" stroke="#999"/><rect x="15" y="15" width="2" height="2" fill="#333"/></svg>
<svg class="a" style="left:1236px;top:175px;" width="18" height="18" viewBox="0 0 18 18"><rect x="1" y="1" width="11" height="14" fill="#fff" stroke="#888"/><path d="M1 5H12M1 9H12M5 1V15" stroke="#aaa"/><rect x="7" y="9" width="10" height="7" rx="1" fill="#333"/><circle cx="12" cy="12.5" r="2" fill="#fff"/></svg>
<svg class="a" style="left:1261px;top:175px;" width="18" height="18" viewBox="0 0 18 18"><path d="M2 5 L6 2 L16 3 L15 13 L11 16 L2 14Z" fill="#bfe3f4" stroke="#3a8fc0"/><path d="M6 2 L6 11 L15 13 M6 11 L2 14" stroke="#3a8fc0" fill="none"/></svg>
<svg class="a" style="left:1288px;top:175px;" width="18" height="18" viewBox="0 0 18 18"><path d="M2 2 L5 5 M5 2 L2 5" stroke="#c03030" stroke-width="1.2"/><path d="M8 1 L6 6 M3 9 H9 M9 9 L12 12 M6 12 L4 16 M12 5 L15 3" stroke="#c8a020" stroke-width="1.6"/><path d="M5 7 L11 10 L14 14" stroke="#333" stroke-width="1.2" fill="none"/><rect x="15" y="15" width="2" height="2" fill="#333"/></svg>
<div class="a" style="left:1311.0px;top:172px;width:24px;height:24px;background:#d8dadc;border:1px solid #c6c8ca"></div>
<svg class="a" style="left:1314px;top:175px;" width="18" height="18" viewBox="0 0 18 18"><rect x="1" y="2" width="10" height="7" fill="#fff" stroke="#777"/><path d="M13 3 V11" stroke="#333" stroke-width="1.5"/><ellipse cx="10" cy="14" rx="4.5" ry="2.3" fill="none" stroke="#333" stroke-width="1.5"/><circle cx="10" cy="14" r="1.2" fill="#333"/></svg>
<div class="a" style="left:1336.5px;top:172px;width:24px;height:24px;background:#d8dadc;border:1px solid #c6c8ca"></div>
<svg class="a" style="left:1340px;top:175px;" width="18" height="18" viewBox="0 0 18 18"><path d="M1 2 L8 9 L15 6 M8 9 L3 15" stroke="#444" stroke-width="1.3" fill="none"/><circle cx="2" cy="2" r="2" fill="#6cc04a"/><circle cx="15" cy="6" r="2.3" fill="#e05050"/><circle cx="3" cy="15" r="2" fill="#3a8fc0"/></svg>
<svg class="a" style="left:1365px;top:175px;" width="18" height="18" viewBox="0 0 18 18"><path d="M8 1 L15 15 L1 15Z" fill="none" stroke="#aaa" stroke-width="2"/><circle cx="8" cy="11" r="2.5" fill="none" stroke="#aaa"/></svg>
<svg class="a" style="left:1390px;top:175px;" width="18" height="18" viewBox="0 0 18 18"><path d="M1 7 L6 3 L15 3 L15 13 L6 13 L1 10Z" fill="#ddd"/><path d="M6 3 V13" stroke="#bbb"/></svg>
<svg class="a" style="left:1154px;top:336px;" width="14" height="22" viewBox="0 0 14 22"><path d="M1 1 L1 17 L5 13 L8 20 L11 19 L8 12 L13 12Z" fill="#fff" stroke="#222" stroke-width="1"/></svg>
<div class="a" style="left:1182px;top:682px;width:275px;height:5px;background:#e4e5e7;border-bottom:1px solid #c9cbcd"></div>
<div class="a" style="left:1182px;top:687px;width:275px;height:101px;background:#8b95a1"></div>
<div class="a" style="left:1205px;top:687px;width:32px;height:101px;background:#97a0aa"></div>
<div class="a" style="left:1182px;top:788px;width:275px;height:40px;background:#f1f2f3;border-top:1px solid #d5d7d9"></div>
<div class="a" style="left:1394px;top:794px;width:41px;height:23px;background:#f9f9f9;border:1px solid #d5d7d9"></div>
<svg class="a" style="left:1399px;top:797px;" width="20" height="18" viewBox="0 0 20 18"><rect x="1" y="0" width="6" height="4" fill="#444"/><rect x="11" y="0" width="6" height="4" fill="#444"/><rect x="0" y="4" width="8" height="13" rx="1" fill="#555"/><rect x="10" y="4" width="8" height="13" rx="1" fill="#555"/><rect x="7" y="6" width="4" height="7" fill="#222"/></svg>
<div class="a" style="left:1424px;top:802.0px;width:0;height:0;border-left:4px solid transparent;border-right:4px solid transparent;border-top:4px solid #666"></div>
<div class="a" style="left:1421px;top:795px;width:1px;height:21px;background:#e0e0e0"></div>
<div class="a" style="left:1439px;top:794px;width:20px;height:23px;background:#f9f9f9;border:1px solid #d5d7d9"></div>
<div class="a" style="left:1343px;top:828px;width:114px;height:46px;background:#1f1f1f"></div>
<div class="a t" style="left:1352px;top:834.5px;font-size:12.5px;color:#ececec;font-weight:normal;clip-path:inset(0 0 0 2px)">ownloads</div>
<div class="a t" style="left:1348px;top:858.5px;font-size:12.5px;color:#ececec;font-weight:normal;clip-path:inset(0 0 0 3px)">ocuments\VuforiaSt</div>
<div class="a" style="left:353px;top:378px;width:829px;height:495px;background:#eeeff0;border-right:1px solid #a9aaab;border-top:1px solid #c5c7c9;box-shadow:4px 0 5px -2px rgba(0,0,0,.18)"></div>
<div class="a" style="left:353px;top:379px;width:828px;height:29px;background:#dcdddf"></div>
<div class="ttl" style="left:718px;top:388px">Sensor Data View</div>
<svg class="a" style="left:1161px;top:389px;" width="10" height="10" viewBox="0 0 10 10"><path d="M1.5 1.5 L8.5 8.5 M8.5 1.5 L1.5 8.5" stroke="#666" stroke-width="2.2"/></svg>
<div class="a" style="left:359px;top:426px;width:811px;height:392px;background:#fff;border:1px solid #d9dadb"></div>
<div class="a" style="left:686px;top:427px;width:483px;height:37px;background:#fafafa;border-bottom:1px solid #e3e3e3"></div>
<div class="a" style="left:1155px;top:465px;width:14px;height:352px;background:#f0f0f0;border-left:1px solid #e0e0e0"></div>
<div class="a" style="left:1159px;top:469px;width:0;height:0;border-left:3.5px solid transparent;border-right:3.5px solid transparent;border-bottom:4px solid #999"></div>
<div class="a" style="left:1156px;top:480px;width:13px;height:1px;background:#ddd"></div>
<div class="tb" style="left:359px;top:426.5px;width:326px;height:390.1px">
<div class="gc" style="height:390.1px"></div>
<div class="hd" style="width:298px"><div class="h1">Set Name</div><div class="h2">SENSOR_1<br>TEMP</div><div class="h3">SENSOR_1<br>ANGLE</div></div>
<div class="rw" style="top:37.50px"><div class="c1" style="">Entry state</div><div class="c2" style="">43.886274</div><div class="c3" style="">44.174284</div></div>
<div class="rw" style="top:55.08px"><svg class="ck" width="11" height="9" viewBox="0 0 12 10"><path d="M1 5.5 L4.2 8.6 L11 1.2" stroke="#222" stroke-width="2.1" fill="none"/></svg><div class="c1" style="">2019-09-27T07:00:30.126Z</div><div class="c2" style="">229.661615</div><div class="c3" style="">1.516545</div></div>
<div class="rw" style="top:72.66px"><svg class="ck" width="11" height="9" viewBox="0 0 12 10"><path d="M1 5.5 L4.2 8.6 L11 1.2" stroke="#222" stroke-width="2.1" fill="none"/></svg><div class="c1" style="">2019-09-27T07:00:31.126Z</div><div class="c2" style="">-174.518596</div><div class="c3" style="">36.837679</div></div>
<div class="rw" style="top:90.24px"><svg class="ck" width="11" height="9" viewBox="0 0 12 10"><path d="M1 5.5 L4.2 8.6 L11 1.2" stroke="#222" stroke-width="2.1" fill="none"/></svg><div class="c1" style="">2019-09-27T07:00:32.126Z</div><div class="c2" style="">-95.971392</div><div class="c3" style="">24.702305</div></div>
<div class="rw" style="top:107.82px"><svg class="ck" width="11" height="9" viewBox="0 0 12 10"><path d="M1 5.5 L4.2 8.6 L11 1.2" stroke="#222" stroke-width="2.1" fill="none"/></svg><div class="c1" style="">2019-09-27T07:00:33.126Z</div><div class="c2" style="">69.389865</div><div class="c3" style="">81.987879</div></div>
<div class="rw" style="top:125.40px"><svg class="ck" width="11" height="9" viewBox="0 0 12 10"><path d="M1 5.5 L4.2 8.6 L11 1.2" stroke="#222" stroke-width="2.1" fill="none"/></svg><div class="c1" style="">2019-09-27T07:00:34.126Z</div><div class="c2" style="">197.526367</div><div class="c3" style="">51.298425</div></div>
<div class="rw" style="top:142.98px"><svg class="ck" width="11" height="9" viewBox="0 0 12 10"><path d="M1 5.5 L4.2 8.6 L11 1.2" stroke="#222" stroke-width="2.1" fill="none"/></svg><div class="c1" style="">2019-09-27T07:00:35.126Z</div><div class="c2" style="">181.306855</div><div class="c3" style="">65.065420</div></div>
<div class="rw" style="top:160.56px"><svg class="ck" width="11" height="9" viewBox="0 0 12 10"><path d="M1 5.5 L4.2 8.6 L11 1.2" stroke="#222" stroke-width="2.1" fill="none"/></svg><div class="c1" style="">2019-09-27T07:00:36.126Z</div><div class="c2" style="">225.430527</div><div class="c3" style="">1.770463</div></div>
<div class="rw" style="top:178.14px"><svg class="ck" width="11" height="9" viewBox="0 0 12 10"><path d="M1 5.5 L4.2 8.6 L11 1.2" stroke="#222" stroke-width="2.1" fill="none"/></svg><div class="c1" style="">2019-09-27T07:00:37.126Z</div><div class="c2" style="">-198.923522</div><div class="c3" style="">86.919673</div></div>
<div class="rw" style="top:195.72px"><svg class="ck" width="11" height="9" viewBox="0 0 12 10"><path d="M1 5.5 L4.2 8.6 L11 1.2" stroke="#222" stroke-width="2.1" fill="none"/></svg><div class="c1" style="">2019-09-27T07:00:38.126Z</div><div class="c2" style="">-164.435751</div><div class="c3" style="">22.787684</div></div>
<div class="rw" style="top:213.30px"><svg class="ck" width="11" height="9" viewBox="0 0 12 10"><path d="M1 5.5 L4.2 8.6 L11 1.2" stroke="#222" stroke-width="2.1" fill="none"/></svg><div class="c1" style="">2019-09-27T07:00:39.126Z</div><div class="c2" style="">-165.416004</div><div class="c3" style="">68.312388</div></div>
<div class="rw" style="top:230.88px"><svg class="ck" width="11" height="9" viewBox="0 0 12 10"><path d="M1 5.5 L4.2 8.6 L11 1.2" stroke="#222" stroke-width="2.1" fill="none"/></svg><div class="c1" style="">2019-09-27T07:00:40.126Z</div><div class="c2" style="">-25.096219</div><div class="c3" style="">9.534110</div></div>
<div class="rw" style="top:248.46px"><svg class="ck" width="11" height="9" viewBox="0 0 12 10"><path d="M1 5.5 L4.2 8.6 L11 1.2" stroke="#222" stroke-width="2.1" fill="none"/></svg><div class="c1" style="background:#fbe6a6;">2019-09-27T07:00:41.126Z</div><div class="c2" style="background:#fbe6a6;">208.724969</div><div class="c3" style="background:#fbe6a6;">82.818702</div></div>
<div class="rw" style="top:266.04px"><svg class="ck" width="11" height="9" viewBox="0 0 12 10"><path d="M1 5.5 L4.2 8.6 L11 1.2" stroke="#222" stroke-width="2.1" fill="none"/></svg><div class="c1" style="">2019-09-27T07:00:42.126Z</div><div class="c2" style="">133.183881</div><div class="c3" style="">13.183946</div></div>
<div class="rw" style="top:283.62px"><svg class="ck" width="11" height="9" viewBox="0 0 12 10"><path d="M1 5.5 L4.2 8.6 L11 1.2" stroke="#222" stroke-width="2.1" fill="none"/></svg><div class="c1" style="">2019-09-27T07:00:43.126Z</div><div class="c2" style="">-89.863269</div><div class="c3" style="">41.242107</div></div>
<div class="rw" style="top:301.20px"><svg class="ck" width="11" height="9" viewBox="0 0 12 10"><path d="M1 5.5 L4.2 8.6 L11 1.2" stroke="#222" stroke-width="2.1" fill="none"/></svg><div class="c1" style="">2019-09-27T07:00:44.126Z</div><div class="c2" style="">138.381726</div><div class="c3" style="">59.044683</div></div>
<div class="rw" style="top:318.78px"><svg class="ck" width="11" height="9" viewBox="0 0 12 10"><path d="M1 5.5 L4.2 8.6 L11 1.2" stroke="#222" stroke-width="2.1" fill="none"/></svg><div class="c1" style="">2019-09-27T07:00:45.126Z</div><div class="c2" style="">-64.296062</div><div class="c3" style="">78.823140</div></div>
<div class="rw" style="top:336.36px"><svg class="ck" width="11" height="9" viewBox="0 0 12 10"><path d="M1 5.5 L4.2 8.6 L11 1.2" stroke="#222" stroke-width="2.1" fill="none"/></svg><div class="c1" style="">2019-09-27T07:00:46.126Z</div><div class="c2" style="">-18.296820</div><div class="c3" style="">40.920340</div></div>
<div class="rw" style="top:353.94px"><svg class="ck" width="11" height="9" viewBox="0 0 12 10"><path d="M1 5.5 L4.2 8.6 L11 1.2" stroke="#222" stroke-width="2.1" fill="none"/></svg><div class="c1" style="">2019-09-27T07:00:47.126Z</div><div class="c2" style="">-97.882013</div><div class="c3" style="">47.563486</div></div>
<div class="rw" style="top:371.52px"><svg class="ck" width="11" height="9" viewBox="0 0 12 10"><path d="M1 5.5 L4.2 8.6 L11 1.2" stroke="#222" stroke-width="2.1" fill="none"/></svg><div class="c1" style="">2019-09-27T07:00:48.126Z</div><div class="c2" style="">-163.583834</div><div class="c3" style="">3.932845</div></div>
</div>
<div class="btn" style="left:358px;top:823px;width:90px"><span style="position:absolute;left:0;width:63px;top:0">Run</span><div class="dd"></div></div>
<div class="btn" style="left:456px;top:823px;width:113px"><span style="position:absolute;left:0;width:87px;top:0">Export to csv</span><div class="dd"></div></div>
<div class="a" style="left:353px;top:864px;width:827px;height:1px;background:#d9d9d9"></div>
<div class="a" style="left:927px;top:495px;width:406px;height:131px;background:#eeeff0;border:1px solid #cfd0d1;box-shadow:1px 1px 3px rgba(0,0,0,.2)"></div>
<div class="a" style="left:928px;top:496px;width:404px;height:28px;background:#e5e6e8"></div>
<div class="a t" style="left:1079px;top:504px;font-size:11.5px;color:#9a9a9a">Emulation progress</div>
<svg class="a" style="left:1312px;top:505px;" width="10" height="10" viewBox="0 0 10 10"><path d="M1.5 1.5 L8.5 8.5 M8.5 1.5 L1.5 8.5" stroke="#9a9a9a" stroke-width="2.2"/></svg>
<div class="a t" style="left:938px;top:534px;font-size:12px;color:#505050">Emulation started</div>
<div class="a" style="left:938px;top:559px;width:383px;height:21px;background:#fafafa;border:1px solid #cfd0d1"></div>
<div class="a" style="left:939px;top:560px;width:217px;height:19px;background:repeating-linear-gradient(90deg,#74cefa 0,#74cefa 3px,#5fc0f0 3px,#5fc0f0 4px)"></div>
<div class="a" style="left:933px;top:586px;width:394px;height:1px;background:#d5d5d5"></div>
<div class="btn" style="left:1278px;top:592px;width:43px;height:24px;background:#fafafa">Stop</div>
<div class="a" style="left:494px;top:722px;width:849px;height:581px;background:#e8e9ed;overflow:hidden">
<div class="a" style="left:0px;top:0px;width:322px;height:581px;background:#949fac"></div>
<div class="a" style="left:320px;top:0px;width:1px;height:513px;background:#8a95a1"></div>
<div class="a" style="left:0px;top:0px;width:321px;height:10px;background:#a7aeb7;border-bottom:1px solid #b9bec4"></div>
<div class="a" style="left:0px;top:0px;width:132px;height:5px;background:#f4f4f4"></div>
<div class="a" style="left:321px;top:513px;width:528px;height:68px;background:#8a95a1;border-top:2px solid #f4f5f6"></div>
<div class="a" style="left:23px;top:36px;width:265px;height:532px;background:repeating-linear-gradient(90deg,rgba(0,0,0,0) 0px,rgba(0,0,0,.06) 3px,rgba(255,220,160,.05) 5px,rgba(0,0,0,0) 9px),repeating-linear-gradient(90deg,#5f4b33 0px,#5a4630 2px,#665238 3px,#5d4931 5px,#614d35 7px);"></div>
<div class="a" style="left:288px;top:36px;width:2px;height:532px;background:#73b3cc"></div>
<div class="a" style="left:42px;top:68px;width:1px;height:500px;background:#9c8c7a;opacity:.9"></div>
<div class="a" style="left:110px;top:68px;width:1px;height:500px;background:#9c8c7a;opacity:.9"></div>
<div class="a" style="left:160px;top:68px;width:1px;height:500px;background:#9c8c7a;opacity:.9"></div>
<div class="a" style="left:178px;top:68px;width:1px;height:500px;background:#9c8c7a;opacity:.9"></div>
<div class="a" style="left:228px;top:68px;width:1px;height:500px;background:#9c8c7a;opacity:.9"></div>
<div class="a" style="left:281px;top:68px;width:1px;height:500px;background:#9c8c7a;opacity:.9"></div>
<div class="a" style="left:91px;top:68px;width:3px;height:500px;background:linear-gradient(90deg,#8a7e72 0,#8a7e72 1px,#6a5a48 1px,#6a5a48 2px,#9c8c7a 2px)"></div>
<div class="a" style="left:247px;top:68px;width:1px;height:500px;background:#8a7a70;opacity:.6"></div>
<div class="a" style="left:23px;top:40px;width:265px;height:1px;background:#b8aaa0;opacity:.8"></div>
<div class="a" style="left:42px;top:65px;width:246px;height:1px;background:#a88080;opacity:.8"></div>
<div class="a" style="left:23px;top:69px;width:265px;height:1px;background:#b8aaa0;opacity:.8"></div>
<div class="a" style="left:23px;top:502px;width:265px;height:1px;background:#b8aaa0;opacity:.8"></div>
<div class="a" style="left:42px;top:509px;width:246px;height:1px;background:#a88080;opacity:.8"></div>
<div class="a" style="left:23px;top:536px;width:265px;height:1px;background:#b8aaa0;opacity:.8"></div>
<div class="a" style="left:23px;top:560px;width:265px;height:2px;background:#a08080;opacity:.8"></div>
<div class="a" style="left:16px;top:103px;width:1px;height:465px;background:repeating-linear-gradient(180deg,#8a6a70 0,#8a6a70 14px,transparent 14px,transparent 18px)"></div>
<div class="a" style="left:22px;top:108px;width:2px;height:400px;background:repeating-linear-gradient(180deg,#e07030 0,#e07030 20px,transparent 20px,transparent 26px);opacity:.7"></div>
<div class="a" style="left:494px;top:722px">
</div>
<div class="a t" style="left:12px;top:30.2px;font-size:13px;color:#333">Y</div>
<div class="a t" style="left:12px;top:50.2px;font-size:13px;color:#333">X</div>
<div class="a t" style="left:50px;top:57.4px;font-size:11px;color:#333">Z</div>
<div class="a t" style="left:12px;top:534.2px;font-size:13px;color:#333">Y</div>
<div class="a t" style="left:12px;top:554.2px;font-size:13px;color:#333">X</div>
<div class="a t" style="left:51px;top:559.4px;font-size:11px;color:#333">Z</div>
<div class="a t" style="left:36px;top:69.8px;font-size:12px;color:rgba(160,110,110,.18)">PRT_CSYS_DEF</div>
<div class="a t" style="left:83px;top:507.4px;font-size:11px;color:#333">Z</div>
<div class="a t" style="left:83px;top:526.8px;font-size:12px;color:#333">Y</div>
<div class="a t" style="left:151px;top:507.4px;font-size:11px;color:#333">Z</div>
<div class="a t" style="left:151px;top:526.8px;font-size:12px;color:#333">Y</div>
<div class="a t" style="left:219px;top:507.4px;font-size:11px;color:#333">Z</div>
<div class="a t" style="left:219px;top:526.8px;font-size:12px;color:#333">Y</div>
<div class="a t" style="left:121px;top:532.8px;font-size:12px;color:#333">X</div>
<div class="a t" style="left:189px;top:532.8px;font-size:12px;color:#333">X</div>
<div class="a t" style="left:259px;top:532.8px;font-size:12px;color:#333">X</div>
<div class="a t" style="left:93px;top:544.8px;font-size:12px;color:rgba(150,90,100,.6)">PRT_CSYS_DEF_CSYS_DEF_CSYS_DEF</div>
<div class="a t" style="left:311px;top:560.8px;font-size:12px;color:#333">ZZ</div>
<div class="a t" style="left:26px;top:568.8px;font-size:12px;color:rgba(150,90,100,.6)">PRT_CSYS_DEF</div>
<div class="a t" style="left:186px;top:568.8px;font-size:12px;color:rgba(150,90,100,.6)">PRT_CSYS_DEF</div>
<div class="a" style="left:212px;top:302px;width:50px;height:26px;border:1px solid #a08080;background:rgba(180,170,170,.25)"></div>
<div class="a" style="left:212px;top:318px;width:50px;height:6px;background:#b0b4c0"></div>
<div class="a" style="left:226px;top:308px;width:2px;height:22px;background:#e03030"></div>
<div class="a" style="left:226px;top:307px;width:20px;height:1px;background:#20c0c0"></div>
<div class="a" style="left:243px;top:304px;width:6px;height:6px;border-radius:3px;background:#30d0e0"></div>
<div class="a" style="left:247px;top:330px;width:14px;height:14px;border-radius:7px;background:#c8ccd4;border:1px solid #888"></div>
<div class="a t" style="left:266px;top:297.8px;font-size:12px;color:rgba(150,90,100,.85)">PRT_CSYS_DEF</div>
<div class="a t" style="left:268px;top:302.8px;font-size:12px;color:rgba(150,90,100,.6)">PRT_CSYS_DEF</div>
<div class="a t" style="left:266px;top:317.8px;font-size:12px;color:rgba(150,90,100,.85)">PRT_CSYS_DEF</div>
<div class="a t" style="left:158px;top:337.8px;font-size:12px;color:rgba(150,90,100,.3)">PRT_CSYS_DEF</div>
<div class="a t" style="left:242px;top:279.4px;font-size:11px;color:#333">Z</div>
<div class="a t" style="left:218px;top:308.4px;font-size:11px;color:#333">X</div>
<div class="a t" style="left:218px;top:320.4px;font-size:11px;color:#333">X</div>
<div class="a t" style="left:218px;top:331.4px;font-size:11px;color:#333">X</div>
<div class="a t" style="left:282px;top:324.4px;font-size:11px;color:#333">X</div>
<div class="a t" style="left:257px;top:343.4px;font-size:11px;color:#333">Y</div>
<div class="a t" style="left:258px;top:354.4px;font-size:11px;color:#333">Z</div>
<div class="a t" style="left:258px;top:361.4px;font-size:11px;color:#333">Z</div>
<div class="a" style="left:496px;top:0;width:359px;height:25px;background:#eceef0;border-left:1px solid #c9cbcd"></div>
<div class="a" style="left:686px;top:0;width:169px;height:3px;background:#454b52"></div>
<div class="a" style="left:132px;top:2px"><div class="a" style="left:0px;top:0px;width:364px;height:28px;background:#f8f9fa;border:1px solid #dcdee0"></div>
<svg class="a" style="left:6px;top:5px;" width="18" height="18" viewBox="0 0 18 18"><rect x="1" y="1" width="14" height="14" fill="#fff" stroke="#999"/><circle cx="7.5" cy="7.5" r="4.5" fill="#e6f3fa" stroke="#555" stroke-width="1.3"/><path d="M11 11 L15 15" stroke="#555" stroke-width="2"/></svg>
<svg class="a" style="left:30px;top:5px;" width="18" height="18" viewBox="0 0 18 18"><circle cx="7" cy="7" r="6" fill="#e6f3fa" stroke="#555" stroke-width="1.3"/><path d="M4 7H10M7 4V10" stroke="#1a6fa8" stroke-width="2"/><path d="M11.5 11.5 L16 16" stroke="#555" stroke-width="2.4"/></svg>
<svg class="a" style="left:56px;top:5px;" width="18" height="18" viewBox="0 0 18 18"><circle cx="7" cy="7" r="6" fill="#e6f3fa" stroke="#555" stroke-width="1.3"/><path d="M4 7H10" stroke="#1a6fa8" stroke-width="2"/><path d="M11.5 11.5 L16 16" stroke="#555" stroke-width="2.4"/></svg>
<svg class="a" style="left:82px;top:5px;" width="18" height="18" viewBox="0 0 18 18"><rect x="1" y="1" width="15" height="15" fill="#bfe3f4" stroke="#666"/><path d="M2 15 L15 2" stroke="#1a6fa8" stroke-width="2.5"/></svg>
<svg class="a" style="left:108px;top:5px;" width="18" height="18" viewBox="0 0 18 18"><path d="M2 13 Q1 8 6 8 Q8 3 13 4 Q16 6 14 11 Q11 16 5 15Z" fill="#999"/><path d="M4 13 Q8 12 12 7" stroke="#ddd" stroke-width="2" fill="none"/><rect x="15" y="15" width="2" height="2" fill="#333"/></svg>
<svg class="a" style="left:134px;top:5px;" width="18" height="18" viewBox="0 0 18 18"><path d="M2 5 L5 2 L15 2 L15 12 L12 15 L2 15Z" fill="#fff" stroke="#3a8fc0"/><path d="M12 5 L15 2 L15 12 L12 15Z" fill="#9fd4f0"/><rect x="15" y="15" width="2" height="2" fill="#333"/></svg>
<svg class="a" style="left:161px;top:5px;" width="18" height="18" viewBox="0 0 18 18"><path d="M2 3 L12 3 L15 6 L15 15 L2 15Z" fill="#fff" stroke="#3a8fc0"/><rect x="8" y="8" width="6" height="7" fill="#eee" stroke="#999"/><rect x="15" y="15" width="2" height="2" fill="#333"/></svg>
<svg class="a" style="left:187px;top:5px;" width="18" height="18" viewBox="0 0 18 18"><rect x="1" y="1" width="11" height="14" fill="#fff" stroke="#888"/><path d="M1 5H12M1 9H12M5 1V15" stroke="#aaa"/><rect x="7" y="9" width="10" height="7" rx="1" fill="#333"/><circle cx="12" cy="12.5" r="2" fill="#fff"/></svg>
<svg class="a" style="left:212px;top:5px;" width="18" height="18" viewBox="0 0 18 18"><path d="M2 5 L6 2 L16 3 L15 13 L11 16 L2 14Z" fill="#bfe3f4" stroke="#3a8fc0"/><path d="M6 2 L6 11 L15 13 M6 11 L2 14" stroke="#3a8fc0" fill="none"/></svg>
<svg class="a" style="left:239px;top:5px;" width="18" height="18" viewBox="0 0 18 18"><path d="M2 2 L5 5 M5 2 L2 5" stroke="#c03030" stroke-width="1.2"/><path d="M8 1 L6 6 M3 9 H9 M9 9 L12 12 M6 12 L4 16 M12 5 L15 3" stroke="#c8a020" stroke-width="1.6"/><path d="M5 7 L11 10 L14 14" stroke="#333" stroke-width="1.2" fill="none"/><rect x="15" y="15" width="2" height="2" fill="#333"/></svg>
<div class="a" style="left:262.0px;top:2px;width:24px;height:24px;background:#d8dadc;border:1px solid #c6c8ca"></div>
<svg class="a" style="left:265px;top:5px;" width="18" height="18" viewBox="0 0 18 18"><rect x="1" y="2" width="10" height="7" fill="#fff" stroke="#777"/><path d="M13 3 V11" stroke="#333" stroke-width="1.5"/><ellipse cx="10" cy="14" rx="4.5" ry="2.3" fill="none" stroke="#333" stroke-width="1.5"/><circle cx="10" cy="14" r="1.2" fill="#333"/></svg>
<div class="a" style="left:287.5px;top:2px;width:24px;height:24px;background:#d8dadc;border:1px solid #c6c8ca"></div>
<svg class="a" style="left:290px;top:5px;" width="18" height="18" viewBox="0 0 18 18"><path d="M1 2 L8 9 L15 6 M8 9 L3 15" stroke="#444" stroke-width="1.3" fill="none"/><circle cx="2" cy="2" r="2" fill="#6cc04a"/><circle cx="15" cy="6" r="2.3" fill="#e05050"/><circle cx="3" cy="15" r="2" fill="#3a8fc0"/></svg>
<svg class="a" style="left:316px;top:5px;" width="18" height="18" viewBox="0 0 18 18"><path d="M8 1 L15 15 L1 15Z" fill="none" stroke="#aaa" stroke-width="2"/><circle cx="8" cy="11" r="2.5" fill="none" stroke="#aaa"/></svg>
<svg class="a" style="left:341px;top:5px;" width="18" height="18" viewBox="0 0 18 18"><path d="M1 7 L6 3 L15 3 L15 13 L6 13 L1 10Z" fill="#ddd"/><path d="M6 3 V13" stroke="#bbb"/></svg></div>
<div class="a" style="left:522px;top:25px;width:340px;height:530px;background:#eeeff0;border:1px solid #c9cbcd;box-shadow:0 1px 3px rgba(0,0,0,.25)"></div>
<div class="a" style="left:523px;top:26px;width:340px;height:28px;background:#dcdddf;border-bottom:1px solid #cfd0d1"></div>
<div class="tb" style="left:533.5px;top:73.5px;width:326px;height:390.1px">
<div class="gc" style="height:390.1px"></div>
<div class="hd" style="width:298px"><div class="h1">Set Name</div><div class="h2">SENSOR_1<br>TEMP</div><div class="h3">SENSOR_1<br>ANGLE</div></div>
<div class="rw" style="top:37.50px"><div class="c1" style="">Entry state</div><div class="c2" style="">43.886274</div><div class="c3" style="">44.174284</div></div>
<div class="rw" style="top:55.08px"><svg class="ck" width="11" height="9" viewBox="0 0 12 10"><path d="M1 5.5 L4.2 8.6 L11 1.2" stroke="#222" stroke-width="2.1" fill="none"/></svg><div class="c1" style="background:#bfe3f6;">2019-09-27T07:00:30.126Z</div><div class="c2" style="background:#bfe3f6;">229.661615</div><div class="c3" style="background:#bfe3f6;">1.516545</div></div>
<div class="rw" style="top:72.66px"><svg class="ck" width="11" height="9" viewBox="0 0 12 10"><path d="M1 5.5 L4.2 8.6 L11 1.2" stroke="#222" stroke-width="2.1" fill="none"/></svg><div class="c1" style="">2019-09-27T07:00:31.126Z</div><div class="c2" style="">-174.518596</div><div class="c3" style="">36.837679</div></div>
<div class="rw" style="top:90.24px"><svg class="ck" width="11" height="9" viewBox="0 0 12 10"><path d="M1 5.5 L4.2 8.6 L11 1.2" stroke="#222" stroke-width="2.1" fill="none"/></svg><div class="c1" style="">2019-09-27T07:00:32.126Z</div><div class="c2" style="">-95.971392</div><div class="c3" style="">24.702305</div></div>
<div class="rw" style="top:107.82px"><svg class="ck" width="11" height="9" viewBox="0 0 12 10"><path d="M1 5.5 L4.2 8.6 L11 1.2" stroke="#222" stroke-width="2.1" fill="none"/></svg><div class="c1" style="">2019-09-27T07:00:33.126Z</div><div class="c2" style="">69.389865</div><div class="c3" style="">81.987879</div></div>
<div class="rw" style="top:125.40px"><svg class="ck" width="11" height="9" viewBox="0 0 12 10"><path d="M1 5.5 L4.2 8.6 L11 1.2" stroke="#222" stroke-width="2.1" fill="none"/></svg><div class="c1" style="">2019-09-27T07:00:34.126Z</div><div class="c2" style="">197.526367</div><div class="c3" style="">51.298425</div></div>
<div class="rw" style="top:142.98px"><svg class="ck" width="11" height="9" viewBox="0 0 12 10"><path d="M1 5.5 L4.2 8.6 L11 1.2" stroke="#222" stroke-width="2.1" fill="none"/></svg><div class="c1" style="">2019-09-27T07:00:35.126Z</div><div class="c2" style="">181.306855</div><div class="c3" style="">65.065420</div></div>
<div class="rw" style="top:160.56px"><svg class="ck" width="11" height="9" viewBox="0 0 12 10"><path d="M1 5.5 L4.2 8.6 L11 1.2" stroke="#222" stroke-width="2.1" fill="none"/></svg><div class="c1" style="">2019-09-27T07:00:36.126Z</div><div class="c2" style="">225.430527</div><div class="c3" style="">1.770463</div></div>
<div class="rw" style="top:178.14px"><svg class="ck" width="11" height="9" viewBox="0 0 12 10"><path d="M1 5.5 L4.2 8.6 L11 1.2" stroke="#222" stroke-width="2.1" fill="none"/></svg><div class="c1" style="">2019-09-27T07:00:37.126Z</div><div class="c2" style="">-198.923522</div><div class="c3" style="">86.919673</div></div>
<div class="rw" style="top:195.72px"><svg class="ck" width="11" height="9" viewBox="0 0 12 10"><path d="M1 5.5 L4.2 8.6 L11 1.2" stroke="#222" stroke-width="2.1" fill="none"/></svg><div class="c1" style="">2019-09-27T07:00:38.126Z</div><div class="c2" style="">-164.435751</div><div class="c3" style="">22.787684</div></div>
<div class="rw" style="top:213.30px"><svg class="ck" width="11" height="9" viewBox="0 0 12 10"><path d="M1 5.5 L4.2 8.6 L11 1.2" stroke="#222" stroke-width="2.1" fill="none"/></svg><div class="c1" style="">2019-09-27T07:00:39.126Z</div><div class="c2" style="">-165.416004</div><div class="c3" style="">68.312388</div></div>
<div class="rw" style="top:230.88px"><svg class="ck" width="11" height="9" viewBox="0 0 12 10"><path d="M1 5.5 L4.2 8.6 L11 1.2" stroke="#222" stroke-width="2.1" fill="none"/></svg><div class="c1" style="">2019-09-27T07:00:40.126Z</div><div class="c2" style="">-25.096219</div><div class="c3" style="">9.534110</div></div>
<div class="rw" style="top:248.46px"><svg class="ck" width="11" height="9" viewBox="0 0 12 10"><path d="M1 5.5 L4.2 8.6 L11 1.2" stroke="#222" stroke-width="2.1" fill="none"/></svg><div class="c1" style="">2019-09-27T07:00:41.126Z</div><div class="c2" style="">208.724969</div><div class="c3" style="">82.818702</div></div>
<div class="rw" style="top:266.04px"><svg class="ck" width="11" height="9" viewBox="0 0 12 10"><path d="M1 5.5 L4.2 8.6 L11 1.2" stroke="#222" stroke-width="2.1" fill="none"/></svg><div class="c1" style="">2019-09-27T07:00:42.126Z</div><div class="c2" style="">133.183881</div><div class="c3" style="">13.183946</div></div>
<div class="rw" style="top:283.62px"><svg class="ck" width="11" height="9" viewBox="0 0 12 10"><path d="M1 5.5 L4.2 8.6 L11 1.2" stroke="#222" stroke-width="2.1" fill="none"/></svg><div class="c1" style="">2019-09-27T07:00:43.126Z</div><div class="c2" style="">-89.863269</div><div class="c3" style="">41.242107</div></div>
<div class="rw" style="top:301.20px"><svg class="ck" width="11" height="9" viewBox="0 0 12 10"><path d="M1 5.5 L4.2 8.6 L11 1.2" stroke="#222" stroke-width="2.1" fill="none"/></svg><div class="c1" style="">2019-09-27T07:00:44.126Z</div><div class="c2" style="">138.381726</div><div class="c3" style="">59.044683</div></div>
<div class="rw" style="top:318.78px"><svg class="ck" width="11" height="9" viewBox="0 0 12 10"><path d="M1 5.5 L4.2 8.6 L11 1.2" stroke="#222" stroke-width="2.1" fill="none"/></svg><div class="c1" style="">2019-09-27T07:00:45.126Z</div><div class="c2" style="">-64.296062</div><div class="c3" style="">78.823140</div></div>
<div class="rw" style="top:336.36px"><svg class="ck" width="11" height="9" viewBox="0 0 12 10"><path d="M1 5.5 L4.2 8.6 L11 1.2" stroke="#222" stroke-width="2.1" fill="none"/></svg><div class="c1" style="">2019-09-27T07:00:46.126Z</div><div class="c2" style="">-18.296820</div><div class="c3" style="">40.920340</div></div>
<div class="rw" style="top:353.94px"><svg class="ck" width="11" height="9" viewBox="0 0 12 10"><path d="M1 5.5 L4.2 8.6 L11 1.2" stroke="#222" stroke-width="2.1" fill="none"/></svg><div class="c1" style="">2019-09-27T07:00:47.126Z</div><div class="c2" style="">-97.882013</div><div class="c3" style="">47.563486</div></div>
<div class="rw" style="top:371.52px"><svg class="ck" width="11" height="9" viewBox="0 0 12 10"><path d="M1 5.5 L4.2 8.6 L11 1.2" stroke="#222" stroke-width="2.1" fill="none"/></svg><div class="c1" style="">2019-09-27T07:00:48.126Z</div><div class="c2" style="">-163.583834</div><div class="c3" style="">3.932845</div></div>
</div>
<div class="btn" style="left:533px;top:471px;width:90px"><span style="position:absolute;left:0;width:63px;top:0">Run</span><div class="dd"></div></div>
<div class="btn" style="left:631px;top:471px;width:113px"><span style="position:absolute;left:0;width:87px;top:0">Export to csv</span><div class="dd"></div></div>
<div class="a" style="left:523px;top:510px;width:330px;height:1px;background:#d0d0d0"></div>
</div>
<svg class="a" style="left:0;top:0" width="1457" height="1312" viewBox="0 0 1457 1312"><defs><filter id="fsh" x="-5%" y="-5%" width="110%" height="110%"><feDropShadow dx="1" dy="1.5" stdDeviation="1.5" flood-color="#000" flood-opacity="0.3"/></filter></defs><path filter="url(#fsh)" fill-rule="evenodd" fill="#07ae90" d="M509 708 H1333 A25 25 0 0 1 1358 733 V1283 A30 30 0 0 1 1328 1313 H515 A30 30 0 0 1 485 1283 V732 A24 24 0 0 1 509 708 Z M502 722 H1333 A10 10 0 0 1 1343 732 V1299 A4 4 0 0 1 1339 1303 H498 A4 4 0 0 1 494 1299 V730 A8 8 0 0 1 502 722 Z"/></svg>
<svg class="a" style="left:0;top:0" width="1457" height="1312" viewBox="0 0 1457 1312">
<defs><filter id="sh" x="-20%" y="-20%" width="140%" height="140%"><feDropShadow dx="1.5" dy="2" stdDeviation="1.5" flood-color="#000" flood-opacity="0.35"/></filter></defs>

<g stroke="#0aab8b" stroke-width="10" fill="none" filter="url(#sh)">
<path d="M274 472 V497 M274 507 V537 M274 547 V577 M274 587 V617 M274 627 V657 M274 667 V697 M274 706 V736 M274 747 V777"/>
<path d="M274 472 V480" stroke-linecap="round"/>
<path d="M196 510.5 L207 510.8 M219 511.2 L243 512"/>
<path d="M235 511.8 L243 512" stroke-linecap="round"/>
<path d="M300 686 L325 686" stroke-linecap="round"/>
<path d="M911 817 V845 M911 854 V884 M911 893 V924 M911 930 V935"/>
<path d="M911 818 V825" stroke-linecap="round"/>
<path d="M948 860 L992 860" stroke-linecap="round"/>
<path d="M27 493 L17 511 M12 521 L-4 550"/>
</g>
<g fill="#0aab8b" stroke="none" filter="url(#sh)">
<polygon points="38,468 12,487 37,500"/>
<polygon points="169,508 197,495 197,523"/>
<polygon points="259,785 289,785 274,814"/>
<polygon points="323,670 353,686 323,701"/>
<polygon points="899,934 928,934 913,969"/>
<polygon points="990,845 1019,860 990,876"/>
</g>
</svg>
</body></html>
